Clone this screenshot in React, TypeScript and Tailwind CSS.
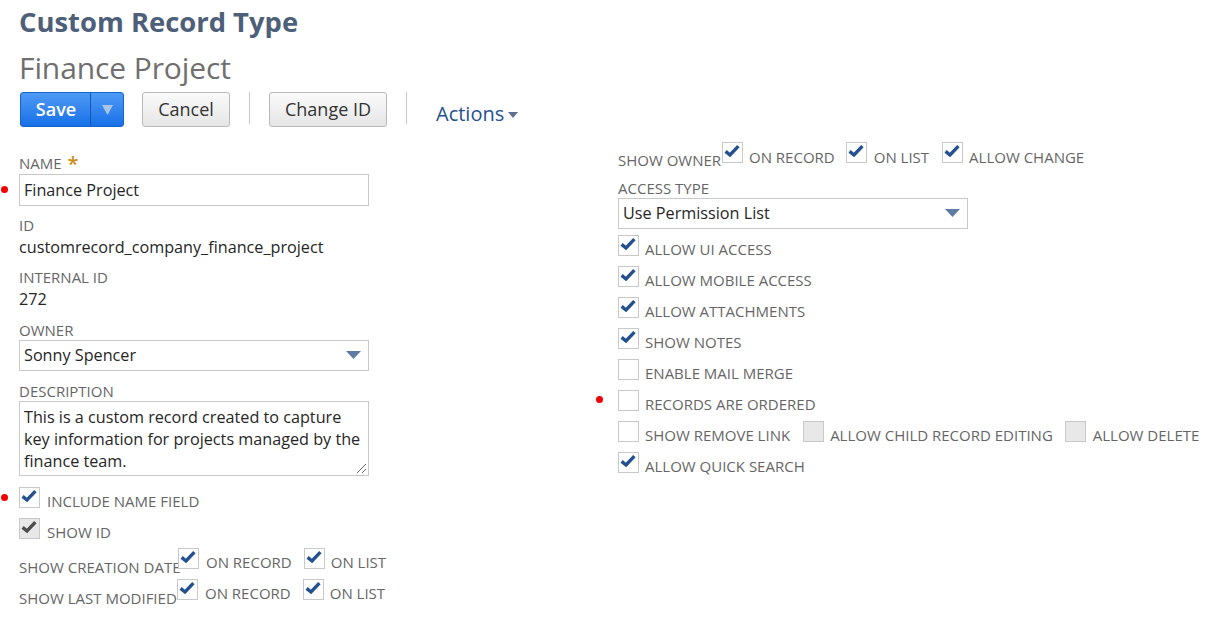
import React from "react";

function Check({ on, disabled, className = "" }: { on?: boolean; disabled?: boolean; className?: string }) {
  return (
    <span
      className={`relative block w-[21px] h-[21px] shrink-0 border border-[#c9c9c9] ${disabled ? "bg-[#e8e8e8]" : "bg-white"} ${className}`}
    >
      {on && (
        <svg viewBox="0 0 21 21" className="absolute left-[-1px] top-[-1px] w-[21px] h-[21px]">
          <path
            d="M3.6 9.4 L8 13 L16.4 4.2"
            fill="none"
            stroke={disabled ? "#4d4d4d" : "#23508f"}
            strokeWidth="3.4"
          />
        </svg>
      )}
    </span>
  );
}

function Label({ children, className = "" }: { children: React.ReactNode; className?: string }) {
  return <span className={`text-[15px] leading-[19px] text-[#666666] whitespace-nowrap ${className}`}>{children}</span>;
}

function CheckRow({ label, on, disabled, labelClass = "ml-[6px]" }: { label: string; on?: boolean; disabled?: boolean; labelClass?: string }) {
  return (
    <div className="flex h-[31px]">
      <Check on={on} disabled={disabled} />
      <Label className={`mt-[5px] ${labelClass}`}>{label}</Label>
    </div>
  );
}

function RedDot({ className }: { className: string }) {
  return <span className={`absolute w-[7px] h-[7px] rounded-full bg-[#f00000] ${className}`} />;
}

function SelectBox({ value }: { value: string }) {
  return (
    <div className="flex items-center justify-between w-[350px] h-[31px] border border-[#c9c9c9] pl-[4px] pr-[7px] pb-[1px] text-[16.2px] text-[#262626]">
      <span>{value}</span>
      <svg width="15" height="8" viewBox="0 0 15 8">
        <path d="M0 0 H15 L7.5 8 Z" fill="#5f7ba3" />
      </svg>
    </div>
  );
}

function InlineCheck({ label, className = "", labelClass = "mt-[5px] ml-[6px]" }: { label: string; className?: string; labelClass?: string }) {
  return (
    <div className={`flex ${className}`}>
      <Check on />
      <Label className={labelClass}>{label}</Label>
    </div>
  );
}

export default function App() {
  return (
    <div
      className="relative w-[1214px] h-[620px] bg-white overflow-hidden pl-[19px]"
      style={{ fontFamily: '"Open Sans", sans-serif' }}
    >
      <h1 className="text-[27.4px] leading-[34px] font-bold text-[#4d5f79] pt-[6px] h-[38px] box-content -mt-[1px] whitespace-nowrap">Custom Record Type</h1>
      <h2 className="text-[30px] leading-[41px] text-[#6f6f6f] mt-[4px] tracking-[-0.1px]">Finance Project</h2>

      <div className="flex items-start h-[35px] mt-[4px] ml-[1px]">
        <div className="flex h-[35px] w-[104px] rounded-[3px] border border-[#1467c8] bg-gradient-to-b from-[#4d9af5] to-[#1570e8] text-white text-[18px] font-semibold">
          <span className="flex items-center justify-center w-[69px] pl-[1px]">Save</span>
          <span className="flex items-center justify-center flex-1 border-l border-[#1459ad]">
            <svg width="11" height="10" viewBox="0 0 11 10">
              <path d="M0 0 H11 L5.5 10 Z" fill="#a9c4e6" />
            </svg>
          </span>
        </div>
        <button className="ml-[18px] w-[88px] h-[35px] rounded-[3px] border border-[#b9b9b9] bg-gradient-to-b from-[#fafafa] to-[#e6e6e6] text-[18px] font-medium text-[#333333]">
          Cancel
        </button>
        <span className="ml-[19px] w-px h-[32px] bg-[#c9c9c9]" />
        <button className="ml-[19px] w-[118px] h-[35px] rounded-[3px] border border-[#b9b9b9] bg-gradient-to-b from-[#fafafa] to-[#e6e6e6] text-[18px] font-medium text-[#333333]">
          Change ID
        </button>
        <span className="ml-[19px] w-px h-[32px] bg-[#c9c9c9]" />
        <span className="ml-[29px] mt-[8px] flex items-center text-[20px] leading-[27px] text-[#24528e]">
          Actions
          <svg width="10" height="6" viewBox="0 0 10 6" className="ml-[4px] mt-[2px]">
            <path d="M0 0 H10 L5 6 Z" fill="#5f7190" />
          </svg>
        </span>
      </div>

      <div className="flex mt-[27px]">
        <div className="relative w-[599px] text-[16.2px] text-[#262626]">
          <RedDot className="left-[-18px] top-[32px]" />
          <div className="flex items-start h-[19px]">
            <Label>NAME</Label>
            <span className="ml-[6px] text-[20px] leading-[20px] font-semibold text-[#d08a12]">*</span>
          </div>
          <div className="flex items-center w-[350px] h-[32px] mt-[1px] border border-[#c9c9c9] pl-[4px]">Finance Project</div>

          <Label className="block mt-[10px]">ID</Label>
          <div className="leading-[20px] mt-[2px]">customrecord_company_finance_project</div>

          <Label className="block mt-[11px]">INTERNAL ID</Label>
          <div className="leading-[20px] mt-[2px]">272</div>

          <Label className="block mt-[12px]">OWNER</Label>
          <SelectBox value="Sonny Spencer" />

          <Label className="block mt-[11px]">DESCRIPTION</Label>
          <div className="relative w-[350px] h-[75px] border border-[#c9c9c9] px-[4px] pt-[4px] leading-[22px]">
            This is a custom record created to capture key information for projects managed by the finance team.
            <svg width="11" height="11" viewBox="0 0 11 11" className="absolute right-[1px] bottom-[1px]">
              <path d="M1 10 L10 1 M6 10 L10 6" stroke="#666666" strokeWidth="1" fill="none" />
            </svg>
          </div>

          <div className="relative mt-[11px]">
            <RedDot className="left-[-18px] top-[7px]" />
            <CheckRow label="INCLUDE NAME FIELD" on labelClass="ml-[7px]" />
            <CheckRow label="SHOW ID" on disabled labelClass="ml-[7px]" />
          </div>

          <div className="flex h-[31px] mt-[-1px]">
            <Label className="mt-[10px] w-[159px]">SHOW CREATION DATE</Label>
            <InlineCheck label="ON RECORD" labelClass="mt-[5px] ml-[7px]" />
            <InlineCheck label="ON LIST" className="ml-[12px]" />
          </div>
          <div className="flex h-[31px]">
            <Label className="mt-[10px] w-[158px]">SHOW LAST MODIFIED</Label>
            <InlineCheck label="ON RECORD" labelClass="mt-[5px] ml-[7px]" />
            <InlineCheck label="ON LIST" className="ml-[12px]" />
          </div>
        </div>

        <div className="relative mt-[-12px] text-[16.2px] text-[#262626]">
          <div className="flex h-[32px] w-[590px]">
            <Label className="mt-[9px] w-[104px]">SHOW OWNER</Label>
            <InlineCheck label="ON RECORD" labelClass="mt-[6px] ml-[6px]" />
            <InlineCheck label="ON LIST" className="ml-[11px]" labelClass="mt-[6px] ml-[7px]" />
            <InlineCheck label="ALLOW CHANGE" className="ml-[13px]" labelClass="mt-[6px] ml-[6px]" />
          </div>
          <Label className="block mt-[5px]">ACCESS TYPE</Label>
          <SelectBox value="Use Permission List" />
          <div className="mt-[6px]">
            <CheckRow label="ALLOW UI ACCESS" on />
            <CheckRow label="ALLOW MOBILE ACCESS" on />
            <CheckRow label="ALLOW ATTACHMENTS" on />
            <CheckRow label="SHOW NOTES" on />
            <CheckRow label="ENABLE MAIL MERGE" />
            <div className="relative">
              <RedDot className="left-[-22px] top-[6px]" />
              <CheckRow label="RECORDS ARE ORDERED" />
            </div>
            <div className="flex h-[31px]">
              <Check />
              <Label className="ml-[6px] mt-[5px]">SHOW REMOVE LINK</Label>
              <Check disabled className="ml-[13px]" />
              <Label className="ml-[6px] mt-[5px]">ALLOW CHILD RECORD EDITING</Label>
              <Check disabled className="ml-[12px]" />
              <Label className="ml-[7px] mt-[5px]">ALLOW DELETE</Label>
            </div>
            <CheckRow label="ALLOW QUICK SEARCH" on />
          </div>
        </div>
      </div>
    </div>
  );
}
